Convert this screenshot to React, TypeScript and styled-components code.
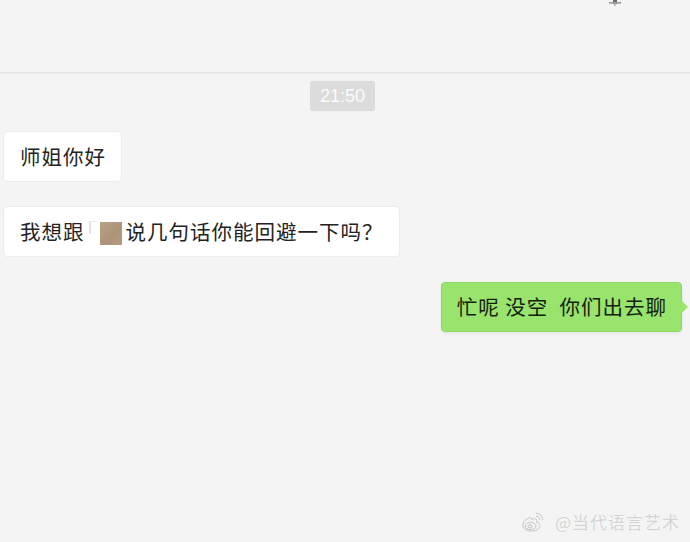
import React from "react";
import styled, { createGlobalStyle } from "styled-components";

const Global = createGlobalStyle`
  html, body { margin: 0; padding: 0; background: #f4f4f4; }
  body { font-family: "Noto Sans CJK SC", "Noto Sans", sans-serif; }
`;

const Page = styled.div`
  position: relative;
  width: 690px;
  height: 542px;
  overflow: hidden;
  background: #f4f4f4;
  display: flex;
  flex-direction: column;
`;

const Header = styled.div`
  height: 72px;
  display: flex;
  justify-content: flex-end;
  align-items: flex-start;
  padding-right: 68px;
  border-bottom: 1px solid #e4e4e4;
  box-shadow: 0 1px 0 #ececec;
`;

const PinMark = styled.div`
  width: 14px;
  height: 7px;
  margin-top: -1px;
  display: flex;
  justify-content: center;
  align-items: flex-start;
`;

const Messages = styled.div`
  display: flex;
  flex-direction: column;
  padding: 8px 0 0 3px;
`;

const TimeRow = styled.div`
  display: flex;
  justify-content: flex-start;
  padding-left: 307px;
`;

const TimeBadge = styled.div`
  width: 65px;
  height: 30px;
  background: #dcdcdc;
  color: #fbfbfb;
  font-family: "Liberation Sans", sans-serif;
  font-size: 18px;
  display: flex;
  align-items: center;
  justify-content: center;
  border-radius: 2px;
`;

const Row = styled.div<{ $right?: boolean; $gap: number }>`
  display: flex;
  justify-content: ${(p) => (p.$right ? "flex-end" : "flex-start")};
  margin-top: ${(p) => p.$gap}px;
  padding-right: ${(p) => (p.$right ? "8px" : "0")};
`;

const Bubble = styled.div<{ $green?: boolean }>`
  position: relative;
  height: ${(p) => (p.$green ? "50px" : "51px")};
  box-sizing: border-box;
  display: flex;
  align-items: center;
  padding: 0 ${(p) => (p.$green ? "14px" : "15px")} 2px
    ${(p) => (p.$green ? "15px" : "16px")};
  background: ${(p) => (p.$green ? "#98e46c" : "#ffffff")};
  border: 1px solid ${(p) => (p.$green ? "#8fd963" : "#ececec")};
  border-radius: 4px;
  color: ${(p) => (p.$green ? "#14200e" : "#232323")};
  font-size: 20.5px;
  letter-spacing: ${(p) => (p.$green ? "1px" : "1px")};
  white-space: pre;
  box-shadow: ${(p) => (p.$green ? "0 2px 3px rgba(0,0,0,0.06)" : "none")};
`;

const Tail = styled.span`
  position: absolute;
  right: -7px;
  top: 17px;
  width: 0;
  height: 0;
  border-top: 7px solid transparent;
  border-bottom: 7px solid transparent;
  border-left: 7px solid #98e46c;
`;

const Censor = styled.span`
  display: inline-flex;
  align-items: center;
  justify-content: flex-end;
  width: 41px;
  height: 26px;
  vertical-align: middle;
  position: relative;
  gap: 3px;
`;

const Smudge = styled.span`
  display: block;
  width: 6px;
  height: 12px;
  margin-top: -6px;
  border-left: 2px solid #d6d6d6;
  border-top: 1px solid #e4e4e4;
  opacity: 0.7;
`;

const Mosaic = styled.span`
  display: block;
  width: 22px;
  height: 23px;
  margin: 6px 4px 0 0;
  background: linear-gradient(135deg, #b9a186 0%, #ad9479 60%, #b49c82 100%);
`;

const Watermark = styled.div`
  position: absolute;
  right: 10px;
  bottom: 8px;
  display: flex;
  align-items: center;
  gap: 10px;
  color: #d4d4d4;
  font-size: 17px;
  letter-spacing: 1px;
  text-shadow: 0 0 1px #ffffff;
`;

const WeiboLogo = () => (
  <svg width="24" height="22" viewBox="0 0 24 22" fill="none" stroke="#c4c4c4" strokeWidth="1">
    <path d="M9.5 6.5C5 7.5 1.5 11 1.8 14.5C2.2 18.5 7 20.5 11.5 20C16.5 19.5 19.5 16.5 18.8 13.5C18.4 11.8 16.8 11.4 15.5 11.6C16.3 9.8 16 8.4 14.6 7.9C13.2 7.4 11.2 8.2 10.4 8.7C10.8 7.4 10.6 6.3 9.5 6.5Z" />
    <ellipse cx="9.5" cy="15" rx="5.5" ry="3.6" />
    <ellipse cx="9" cy="15.3" rx="2" ry="1.6" />
    <path d="M15 2.5C18.5 2 22 5 21.5 9.2" />
    <path d="M15 5.2C16.8 5 18.8 6.6 18.6 8.8" />
  </svg>
);

export default function App() {
  return (
    <Page>
      <Global />
      <Header>
        <PinMark>
          <svg width="14" height="7" viewBox="0 0 14 7">
            <rect x="5" y="0" width="4" height="5" fill="#6b6b6b" />
            <rect x="1" y="3" width="12" height="1.6" fill="#9a9a9a" />
            <rect x="6.3" y="4" width="1.4" height="3" fill="#a8a8a8" />
          </svg>
        </PinMark>
      </Header>
      <Messages>
        <TimeRow>
          <TimeBadge>21:50</TimeBadge>
        </TimeRow>
        <Row $gap={20}>
          <Bubble>师姐你好</Bubble>
        </Row>
        <Row $gap={24}>
          <Bubble>
            我想跟
            <Censor>
              <Smudge />
              <Mosaic />
            </Censor>
            说几句话你能回避一下吗？
          </Bubble>
        </Row>
        <Row $right $gap={25}>
          <Bubble $green>
            {"忙呢 没空  你们出去聊"}
            <Tail />
          </Bubble>
        </Row>
      </Messages>
      <Watermark>
        <WeiboLogo />
        <span>@当代语言艺术</span>
      </Watermark>
    </Page>
  );
}
